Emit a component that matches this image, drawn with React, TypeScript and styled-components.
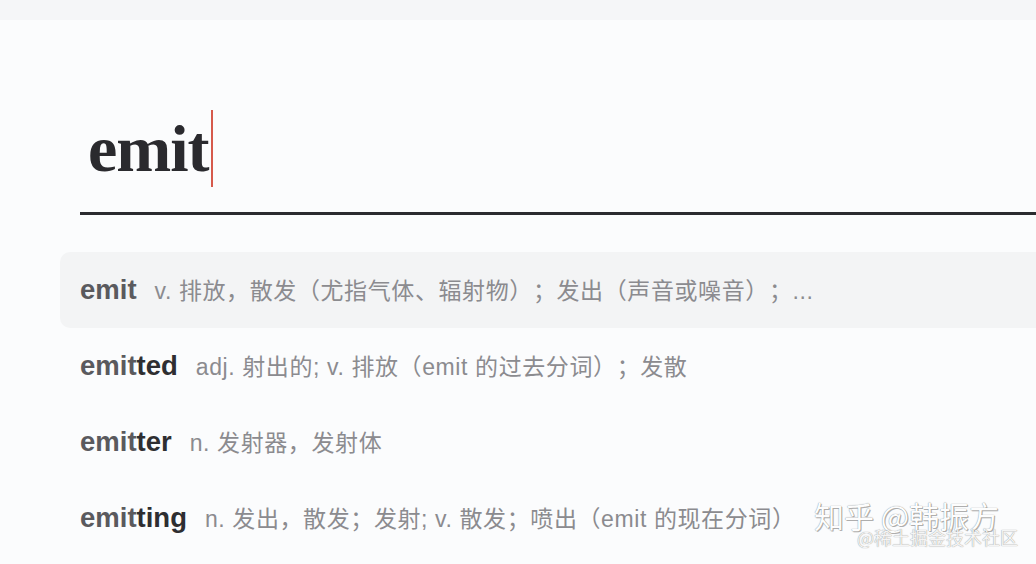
import React from 'react'
import styled, { createGlobalStyle } from 'styled-components'

const GlobalStyle = createGlobalStyle`
  html, body {
    margin: 0;
    padding: 0;
    background: #fbfcfd;
  }
`

const Page = styled.div`
  position: relative;
  width: 1036px;
  height: 564px;
  overflow: hidden;
  background: #fbfcfd;
  font-family: 'Liberation Sans', 'Noto Sans CJK SC', sans-serif;
`

const TopBar = styled.div`
  height: 20px;
  background: #f5f6f8;
`

const SearchBox = styled.div`
  margin-left: 80px;
  padding: 90px 0 25px 8px;
  border-bottom: 3px solid #2b2b2f;
`

const Query = styled.div`
  display: flex;
  height: 77px;
  line-height: 77px;
`

const QueryText = styled.span`
  font-family: 'Liberation Serif', 'Noto Sans CJK SC', serif;
  font-weight: 700;
  font-size: 66px;
  letter-spacing: -1px;
  color: #2a2a2e;
`

const Caret = styled.span`
  width: 2px;
  height: 77px;
  margin-left: 2px;
  background: #d65a4c;
`

const SuggestList = styled.ul`
  list-style: none;
  margin: 37px 0 0 60px;
  padding: 0;
`

const SuggestRow = styled.li<{ active?: boolean }>`
  display: flex;
  align-items: baseline;
  height: 76px;
  line-height: 76px;
  padding-left: 20px;
  border-radius: 10px 0 0 10px;
  background: ${({ active }) => (active ? '#f3f4f5' : 'transparent')};
  white-space: nowrap;
`

const Word = styled.span`
  font-weight: 700;
  font-size: 27.5px;
  color: #2e2e31;
`

const Match = styled.span`
  color: #5a5a5e;
`

const Meaning = styled.span`
  margin-left: 18px;
  font-size: 23px;
  letter-spacing: 0.6px;
  text-spacing-trim: space-all;
  color: #8b8b8f;
`

const Watermark = styled.div`
  position: absolute;
  left: 814px;
  top: 496px;
  font-family: 'Noto Sans CJK SC', sans-serif;
  font-size: 30px;
  line-height: 38px;
  color: #fdfdfd;
  text-shadow: 0 0 1px #6f6f6f, 1px 1px 0 #b5b5b5;
  pointer-events: none;
`

const SubMark = styled.div`
  position: absolute;
  left: 857px;
  top: 525px;
  font-family: 'Noto Sans CJK SC', sans-serif;
  font-size: 18px;
  line-height: 24px;
  color: #f4f4f4;
  text-shadow: 0 0 1px #7a7a7a;
  pointer-events: none;
`

type Suggestion = {
  word: string
  meaning: string
}

const query = 'emit'

const suggestions: Suggestion[] = [
  { word: 'emit', meaning: 'v. 排放，散发（尤指气体、辐射物）；发出（声音或噪音）；...' },
  { word: 'emitted', meaning: 'adj. 射出的; v. 排放（emit 的过去分词）；发散' },
  { word: 'emitter', meaning: 'n. 发射器，发射体' },
  { word: 'emitting', meaning: 'n. 发出，散发；发射; v. 散发；喷出（emit 的现在分词）' },
]

const App = () => {
  return (
    <Page>
      <GlobalStyle />
      <TopBar />
      <SearchBox>
        <Query>
          <QueryText>{query}</QueryText>
          <Caret />
        </Query>
      </SearchBox>
      <SuggestList>
        {suggestions.map((item, i) => (
          <SuggestRow key={item.word} active={i === 0}>
            <Word>
              <Match>{item.word.slice(0, query.length)}</Match>
              {item.word.slice(query.length)}
            </Word>
            <Meaning>{item.meaning}</Meaning>
          </SuggestRow>
        ))}
      </SuggestList>
      <Watermark>知乎 @韩振方</Watermark>
      <SubMark>@稀土掘金技术社区</SubMark>
    </Page>
  )
}

export default App
